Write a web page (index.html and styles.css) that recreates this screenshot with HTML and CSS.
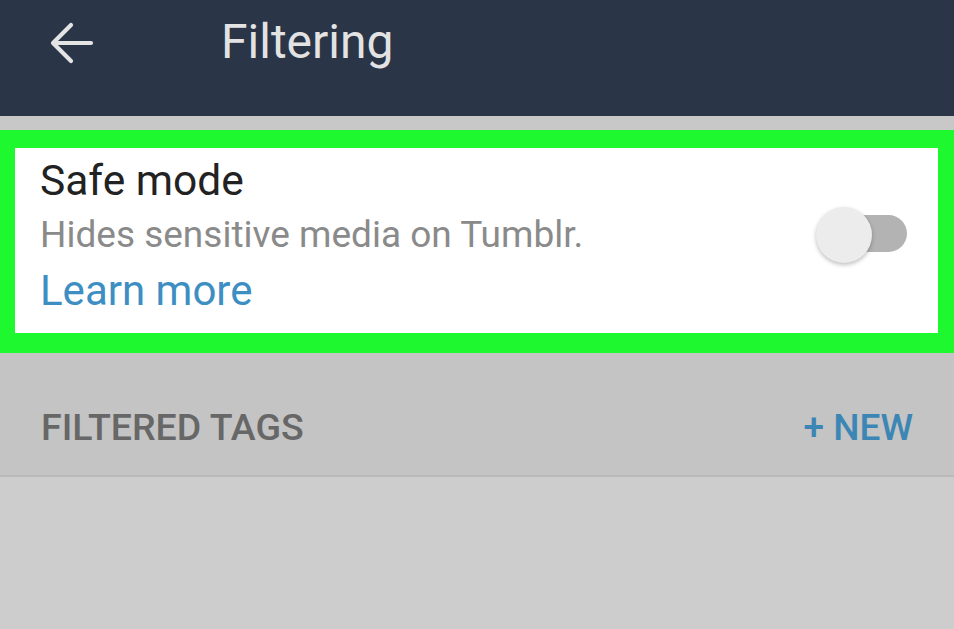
FILE: index.html
```html
<!DOCTYPE html>
<html>
<head>
<meta charset="utf-8">
<link rel="stylesheet" href="styles.css">
</head>
<body>
<div class="page">
  <header class="topbar">
    <svg class="back" width="44" height="42" viewBox="0 0 44 42">
      <path d="M41 21 H4 M21 3 L3 21 L21 39" fill="none" stroke="#e4e4e4" stroke-width="4.2" stroke-linecap="round" stroke-linejoin="round"/>
    </svg>
    <div class="title">Filtering</div>
  </header>
  <div class="strip"></div>
  <div class="highlight">
    <div class="card">
      <div class="texts">
        <div class="name">Safe mode</div>
        <div class="desc">Hides sensitive media on Tumblr.</div>
        <div class="link">Learn more</div>
      </div>
      <div class="switch">
        <div class="track"></div>
        <div class="knob"></div>
      </div>
    </div>
  </div>
  <div class="section">
    <div class="section-title">FILTERED TAGS</div>
    <div class="section-action">+ NEW</div>
  </div>
  <div class="rest"></div>
</div>
</body>
</html>
```
FILE: styles.css
```css
* { box-sizing: border-box; }
html, body { margin: 0; padding: 0; }
body {
  width: 954px;
  height: 629px;
  overflow: hidden;
  background: #cdcdcd;
  font-family: Roboto, "Noto Sans", sans-serif;
}
.page { display: flex; flex-direction: column; height: 629px; }
.topbar {
  height: 116px;
  background: #2a3547;
  display: flex;
  align-items: flex-start;
  padding-top: 22px;
  padding-left: 50px;
}
.back { flex: none; display: block; }
.title {
  margin-left: 127px;
  margin-top: -8px;
  color: #e3e3e3;
  font-size: 48px;
  line-height: 56px;
  font-weight: 400;
}
.strip { height: 14px; background: #c8c8c8; }
.highlight {
  height: 223px;
  background: #1ef82f;
  padding: 18px 16px 20px 15px;
}
.card {
  height: 100%;
  background: #ffffff;
  display: flex;
  align-items: flex-start;
  padding-left: 25px;
  padding-right: 31px;
}
.texts { flex: 1; padding-top: 7px; }
.name {
  font-size: 42.5px;
  line-height: 52px;
  color: #222222;
}
.desc {
  font-size: 37px;
  line-height: 56px;
  color: #8a8a8a;
}
.link {
  font-size: 42px;
  line-height: 56px;
  color: #3d8ec2;
}
.switch {
  position: relative;
  width: 91px;
  height: 56px;
  flex: none;
  margin-top: 59px;
}
.track {
  position: absolute;
  left: 14px;
  top: 8px;
  width: 77px;
  height: 37px;
  border-radius: 19px;
  background: #b3b3b3;
}
.knob {
  position: absolute;
  left: 0;
  top: 0;
  width: 56px;
  height: 56px;
  border-radius: 50%;
  background: #ececec;
  box-shadow: 0 2px 4px rgba(0,0,0,0.25);
}
.section {
  height: 124px;
  background: #c4c4c4;
  border-bottom: 2px solid #bababa;
  display: flex;
  align-items: center;
  justify-content: space-between;
  padding: 26px 41px 0 41px;
}
.section-title {
  font-size: 37.5px;
  font-weight: 500;
  color: #676767;
}
.section-action {
  font-size: 37px;
  font-weight: 500;
  color: #3b86b5;
}
.rest { flex: 1; background: #cdcdcd; }
```
